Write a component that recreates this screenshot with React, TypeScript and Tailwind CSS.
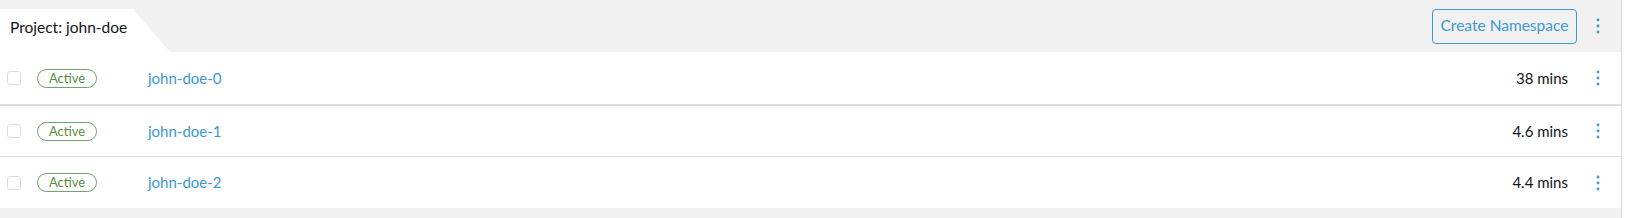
const ROWS = [
  { name: "john-doe-0", age: "38 mins" },
  { name: "john-doe-1", age: "4.6 mins" },
  { name: "john-doe-2", age: "4.4 mins" },
]

const Kebab = () => (
  <div className="w-[26px] flex justify-center">
    <svg width="4" height="16" viewBox="0 0 4 16" className="text-[#3d98d3]">
      <circle cx="2" cy="2" r="1.4" fill="currentColor" />
      <circle cx="2" cy="8" r="1.4" fill="currentColor" />
      <circle cx="2" cy="14" r="1.4" fill="currentColor" />
    </svg>
  </div>
)

const Row = ({ name, age }: { name: string; age: string }) => (
  <div className="flex items-center h-full">
    <div className="w-[37px] pl-[7px] flex">
      <span className="w-[14px] h-[14px] rounded-[3px] border border-[#dcdde3] bg-white" />
    </div>
    <div className="w-[111px] flex">
      <span className="w-[60px] h-[19px] rounded-full border border-[#6fa36f] text-[#5b8f3d] text-[13px] leading-none flex items-center justify-center">
        Active
      </span>
    </div>
    <a className="flex-1 text-[15px] text-[#3d98d3]">{name}</a>
    <span className="text-[15px] text-[#141419] mr-[17px]">{age}</span>
    <Kebab />
    <div className="w-[10px]" />
  </div>
)

export default function App() {
  return (
    <div className="w-[1627px] h-[218px] bg-white flex font-['Lato',sans-serif]">
      <div className="w-[1622px] border-r border-[#d8d8dc] flex flex-col">
        {/* header */}
        <header className="h-[52px] bg-[#f1f1f1] flex justify-between">
          <div className="self-end h-[43px] w-[170px] bg-white pl-[10px] pt-[6px] text-[15.5px] leading-[24px] text-[#141419] [clip-path:polygon(0_0,133px_0,100%_100%,0_100%)]">
            Project: john-doe
          </div>
          <div className="flex items-center pr-[10px]">
            <button className="h-[35px] w-[145px] rounded-[4px] border border-[#3d98d3] text-[#3d98d3] text-[15.5px] bg-[#f1f1f1] mr-[8px]">
              Create Namespace
            </button>
            <Kebab />
          </div>
        </header>
        <div className="h-[52px] border-b-2 border-[#dcdde3] box-content">
          <Row {...ROWS[0]} />
        </div>
        <div className="h-[50px] border-b border-[#dcdde3] box-content">
          <Row {...ROWS[1]} />
        </div>
        <div className="h-[51px]">
          <Row {...ROWS[2]} />
        </div>
        <div className="flex-1 bg-[#f1f1f1]" />
      </div>
    </div>
  )
}
